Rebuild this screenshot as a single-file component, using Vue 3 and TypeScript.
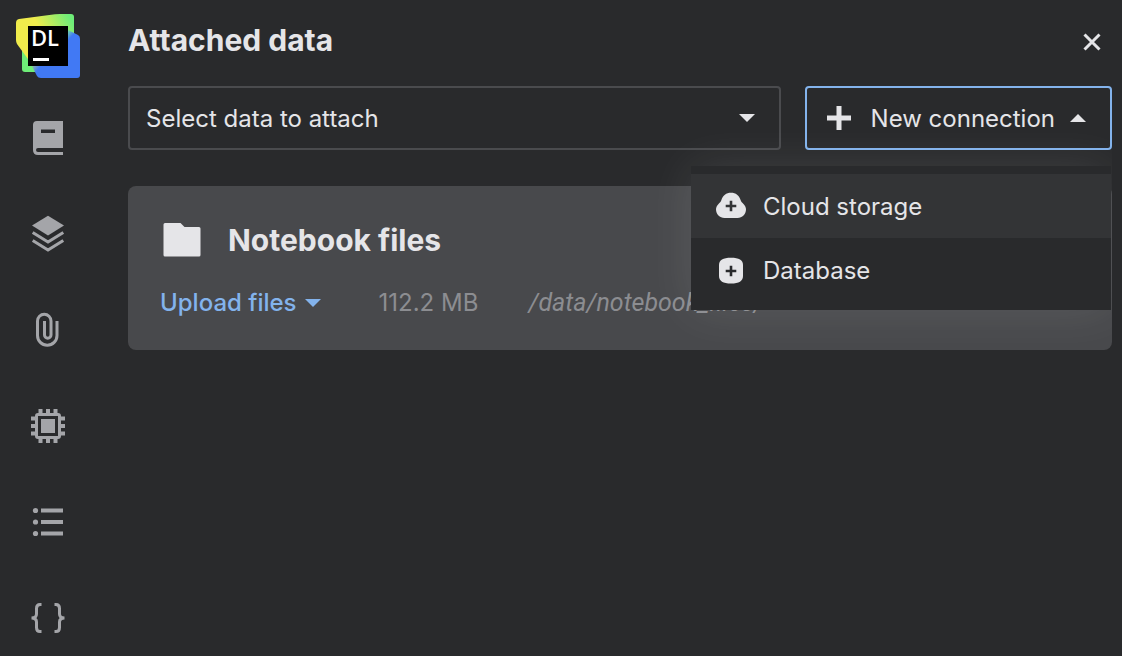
<script setup lang="ts">
import { ref } from 'vue'

const source = ref('')
const menuOpen = ref(true)
</script>

<template>
  <div class="app">
    <nav class="rail" aria-label="Tools">
      <a class="logo" href="#" aria-label="Home">
        <svg width="64" height="64" viewBox="0 0 64 64">
          <defs>
            <linearGradient id="warm" gradientUnits="userSpaceOnUse" x1="8" y1="30" x2="54" y2="4">
              <stop offset="0.4" stop-color="#f0ec4c" />
              <stop offset="1" stop-color="#6eed78" />
            </linearGradient>
            <linearGradient id="cool" gradientUnits="userSpaceOnUse" x1="12" y1="44" x2="27" y2="55">
              <stop offset="0.15" stop-color="#d6e45a" />
              <stop offset="0.8" stop-color="#4179f4" />
            </linearGradient>
            <linearGradient id="edge" gradientUnits="userSpaceOnUse" x1="50" y1="17" x2="58" y2="25">
              <stop offset="0.1" stop-color="#72d6a5" />
              <stop offset="0.7" stop-color="#4179f4" />
            </linearGradient>
          </defs>
          <path d="M6 30h26v28H9q-3 0-3-3z" fill="#6eed78" />
          <path d="M3 5 39 .3Q42 0 44 0h11q3 0 3 3v31L30 55 17 52 1 30Q0 28 0 26V9q0-3.500 3-4z" fill="url(#warm)" />
          <path d="M15 50 30 36h34v25q0 3-3 3H25q-3 0-4-2z" fill="url(#cool)" />
          <path d="M50 15 62 21q2 1 2 4v27H50z" fill="url(#edge)" />
          <path d="M12 12h40v40H12z" />
          <path d="M17 44h16v3H17z" fill="#fff" />
          <text x="15" y="32" class="logo-text">DL</text>
        </svg>
      </a>
      <button class="tool" type="button" aria-label="Notebook">
        <svg width="48" height="48" viewBox="0 0 48 48">
          <path fill-rule="evenodd" d="M13 7h26v27H14q-2 0-2 2t2 2h25v3H14q-5 0-5-5V11q0-4 4-4zM17 15.500v3.500h14v-3.500z" />
        </svg>
      </button>
      <button class="tool" type="button" aria-label="Layers">
        <svg width="48" height="48" viewBox="0 0 48 48">
          <path d="M24 5.800 40 15.600 24 25.500 8 15.600z" />
          <path class="line" d="M8.700 22.500 24 32 39.300 22.500M8.700 30.500 24 40 39.300 30.500" />
        </svg>
      </button>
      <button class="tool" type="button" aria-label="Attached data">
        <svg width="48" height="48" viewBox="0 0 48 48">
          <path class="line" d="M33 15v14.500a9.750 9.750 0 0 1-19.500 0V15a6.750 6.750 0 0 1 13.500 0v14a3.250 3.250 0 0 1-6.500 0V15" />
        </svg>
      </button>
      <button class="tool" type="button" aria-label="Machine">
        <svg width="48" height="48" viewBox="0 0 48 48">
          <path d="M17 17h14v14H17z" />
          <rect class="line" x="12.500" y="12.500" width="23" height="23" rx="1.500" />
          <path class="line teeth" d="M16.500 7v5M24 7v5M31.500 7v5M16.500 36v5M24 36v5M31.500 36v5M7 16.500h5M7 24h5M7 31.500h5M36 16.500h5M36 24h5M36 31.500h5" />
        </svg>
      </button>
      <button class="tool" type="button" aria-label="Contents">
        <svg width="48" height="48" viewBox="0 0 48 48">
          <circle cx="11.500" cy="12.500" r="2.600" /><circle cx="11.500" cy="24" r="2.600" /><circle cx="11.500" cy="35.500" r="2.600" />
          <path class="line rows" d="M17 12.500h22M17 24h22M17 35.500h22" />
        </svg>
      </button>
      <button class="tool" type="button" aria-label="Variables">
        <svg width="48" height="48" viewBox="0 0 48 48">
          <path class="line" d="M17.500 10.500H16q-3.500 0-3.500 4V20q0 4-5 4 5 0 5 4v5.500q0 4 3.500 4h1.500M30.500 10.500H32q3.500 0 3.500 4V20q0 4 5 4-5 0-5 4v5.500q0 4-3.500 4h-1.500" />
        </svg>
      </button>
    </nav>

    <main class="panel">
      <header class="head">
        <h1>Attached data</h1>
        <button class="close" type="button" aria-label="Close">
          <svg width="20" height="20" viewBox="0 0 20 20"><path d="m2.500 2.500 15 15m0-15-15 15" /></svg>
        </button>
      </header>

      <div class="controls">
        <div class="picker">
          <select v-model="source" aria-label="Data to attach">
            <option value="">Select data to attach</option>
          </select>
          <svg class="caret" width="16" height="8" viewBox="0 0 16 8"><path d="M0 0h16L8 8z" /></svg>
        </div>
        <div class="connection">
          <button class="new" type="button" :aria-expanded="menuOpen" @click="menuOpen = !menuOpen">
            <svg width="24" height="24" viewBox="0 0 24 24"><path d="M9.500 0h5v9.500H24v5h-9.500V24h-5v-9.500H0v-5h9.500z" /></svg>
            <span class="label">New connection</span>
            <svg width="16" height="8" viewBox="0 0 16 8"><path d="M0 8h16L8 0z" /></svg>
          </button>
          <div v-if="menuOpen" class="menu" role="menu">
            <button class="item active" type="button" role="menuitem">
              <svg width="32" height="32" viewBox="0 0 32 32">
                <path fill-rule="evenodd" d="M16 2.700c4.800 0 8.200 2.600 9.600 7.300.5 1.700 1.700 2.700 2.900 4 1.500 1.600 2.500 3.400 2.500 5.300 0 5-3.700 8.700-8.500 8.700h-13C4.700 28 1 24.300 1 19.300 1 17.400 2 15.600 3.500 14c1.200-1.300 2.400-2.300 2.900-4C7.800 5.300 11.200 2.700 16 2.700zM14.700 10.700v4h-4v2.600h4v4h2.600v-4h4v-2.600h-4v-4z" />
              </svg>
              <span>Cloud storage</span>
            </button>
            <button class="item" type="button" role="menuitem">
              <svg width="32" height="32" viewBox="0 0 32 32">
                <path fill-rule="evenodd" d="M4 11c0-5 4-7.300 12-7.300S28 6 28 11v11c0 5-4 7.500-12 7.500S4 27 4 22zM14.700 11.700v4h-4v2.600h4v4h2.600v-4h4v-2.600h-4v-4z" />
              </svg>
              <span>Database</span>
            </button>
          </div>
        </div>
      </div>

      <section class="card">
        <div class="card-title">
          <svg width="40" height="40" viewBox="0 0 40 40"><path d="M5 3h15.500l4 4H39q1.500 0 1.500 1.500V35q0 1.500-1.500 1.500H5q-1.500 0-1.500-1.500V4.500Q3.500 3 5 3z" /></svg>
          <h2>Notebook files</h2>
        </div>
        <div class="card-info">
          <button class="upload" type="button">
            <span>Upload files</span>
            <svg width="16" height="8" viewBox="0 0 16 8"><path d="M0 0h16L8 8z" /></svg>
          </button>
          <span class="size">112.2 MB</span>
          <span class="path">/data/notebook_files/</span>
        </div>
      </section>
    </main>
  </div>
</template>

<style>
body {
  background: #292a2c;
}
</style>

<style scoped>
.app {
  display: flex;
  min-height: 100vh;
  padding-right: 10px;
  box-sizing: border-box;
  background: #292a2c;
  color: #e5e5e8;
  font-family: Inter, "Liberation Sans", sans-serif;
  font-size: 24px;
  line-height: 32px;
}
button,
select {
  margin: 0;
  padding: 0;
  border: 0;
  background: none;
  color: inherit;
  font: inherit;
  cursor: pointer;
}
svg {
  display: block;
  flex: none;
  fill: currentColor;
  overflow: visible;
}
.rail {
  display: flex;
  flex: none;
  flex-direction: column;
  align-items: center;
  gap: 48px;
  width: 96px;
  padding-top: 14px;
  box-sizing: border-box;
}
.logo {
  margin-bottom: -12px;
  color: #000;
}
.logo-text {
  fill: #fff;
  font: 600 22px "Open Sans", sans-serif;
}
.tool {
  color: #a4a5a9;
}
.line {
  fill: none;
  stroke: currentColor;
  stroke-width: 3;
}
.teeth,
.rows {
  stroke-width: 4;
}
.panel {
  flex: 1;
  min-width: 0;
  padding: 24px 0 0 32px;
  overflow: hidden;
}
.head {
  display: flex;
  align-items: flex-end;
  justify-content: space-between;
  padding-right: 10px;
}
h1,
h2 {
  margin: 0;
  font-size: 30px;
  line-height: 32px;
  font-weight: 700;
}
.close {
  padding: 4px 0;
}
.close path {
  fill: none;
  stroke: currentColor;
  stroke-width: 3;
}
.controls {
  display: flex;
  gap: 24px;
  margin-top: 30px;
}
.picker {
  position: relative;
  flex: 1;
}
.picker select {
  width: 100%;
  height: 64px;
  padding: 2px 56px 0 16px;
  border: 2px solid #4a4b4e;
  border-radius: 4px;
  appearance: none;
}
.caret {
  position: absolute;
  top: 28px;
  right: 26px;
  pointer-events: none;
}
.connection {
  position: relative;
}
.new {
  display: flex;
  align-items: center;
  height: 64px;
  padding: 0 24px 0 20px;
  border: 2px solid #83b3ec;
  border-radius: 4px;
}
.new .label {
  margin: 0 15px 0 20px;
  padding-top: 2px;
}
.menu {
  position: absolute;
  top: 80px;
  right: 1px;
  width: 420px;
  padding: 8px 0;
  box-sizing: border-box;
  background: #292a2c;
  box-shadow: 0 0 48px rgba(255, 255, 255, 0.1);
}
.item {
  display: flex;
  align-items: center;
  gap: 16px;
  width: 100%;
  height: 64px;
  padding: 0 24px;
}
.item span {
  padding-top: 2px;
}
.item.active {
  background: #333436;
}
.card {
  margin-top: 36px;
  padding: 34px 32px 31px;
  border-radius: 8px;
  background: #48494c;
}
.card-title {
  display: flex;
  align-items: center;
  gap: 28px;
}
.card-info {
  display: flex;
  align-items: center;
  gap: 50px;
  margin-top: 27px;
}
.upload {
  display: flex;
  align-items: center;
  gap: 8px;
  margin-right: 8px;
  color: #83b3ec;
  font-weight: 500;
}
.size,
.path {
  color: #8c8d91;
}
.path {
  font-family: Roboto, "Liberation Sans", sans-serif;
  font-size: 25px;
  font-style: italic;
}
</style>
